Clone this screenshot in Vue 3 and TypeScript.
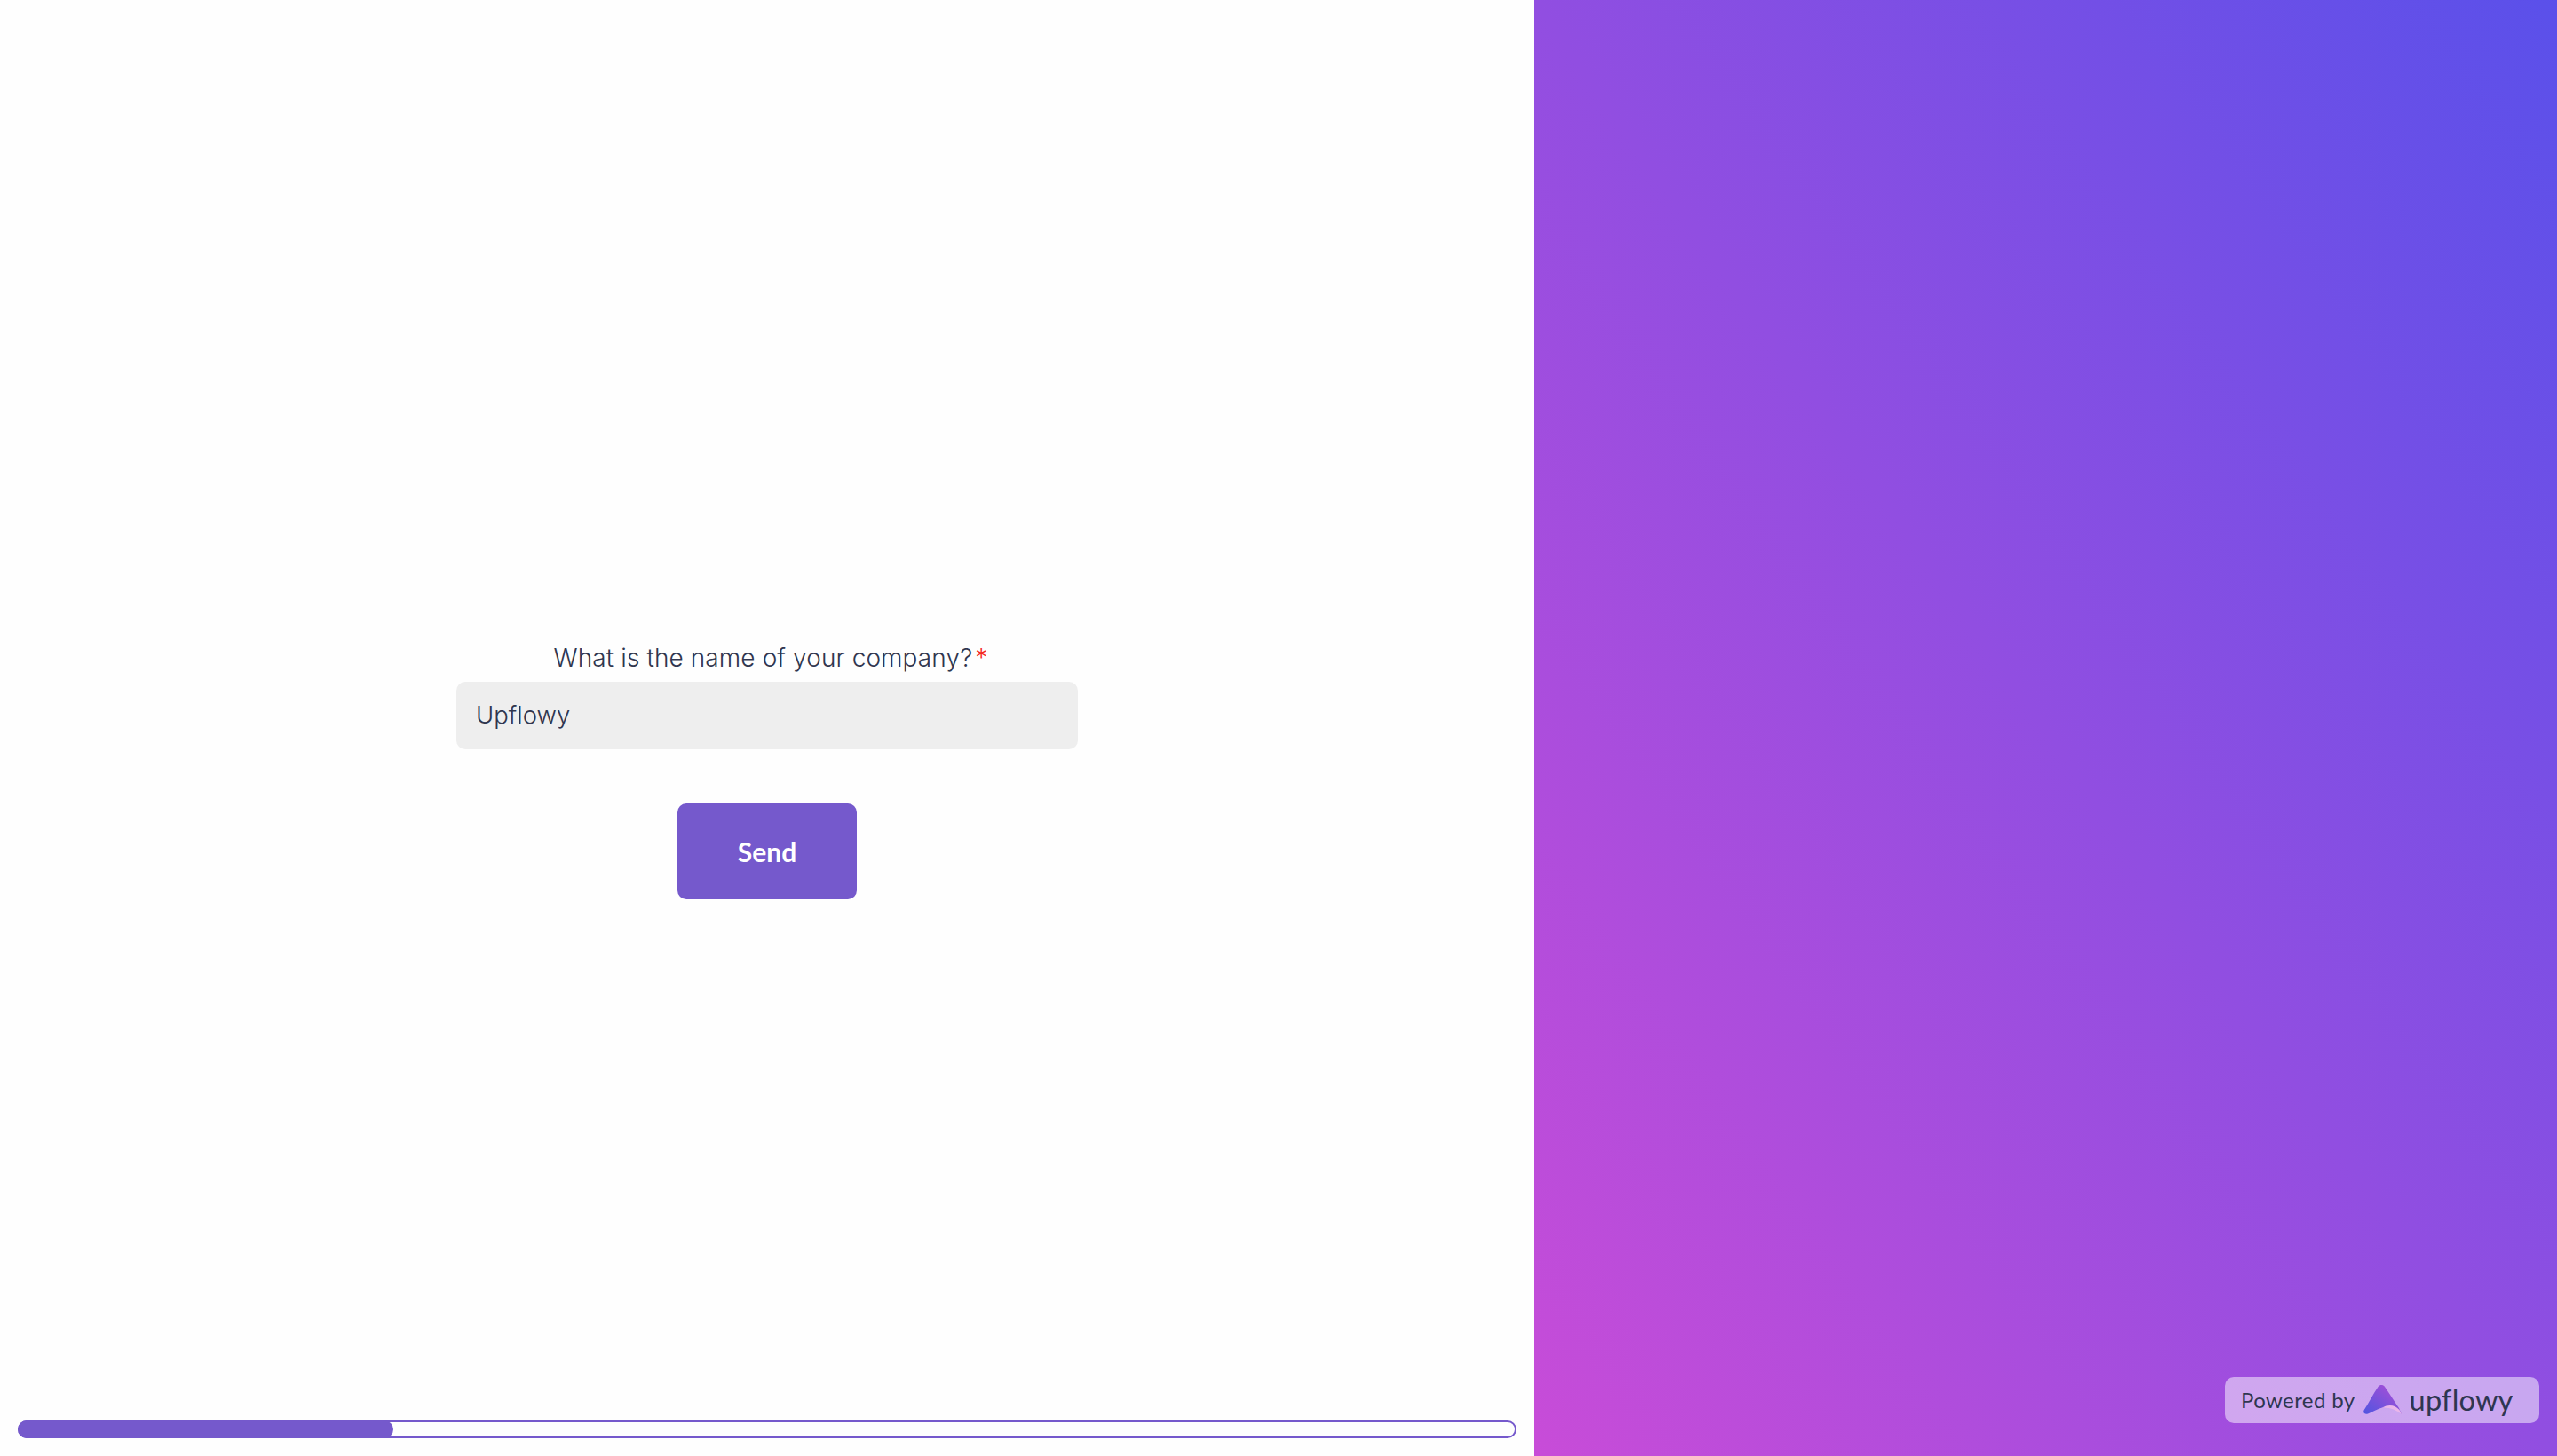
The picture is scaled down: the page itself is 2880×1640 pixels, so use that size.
<script setup lang="ts">
// 表单页：左侧问题与进度条，右侧渐变面板
import { ref } from 'vue'

const company = ref('Upflowy')
const progress = 25.1
</script>

<template>
  <div class="page">
    <section class="left">
      <form class="form" @submit.prevent>
        <label class="question" for="company">
          What is the name of your company?<span class="required">*</span>
        </label>
        <input id="company" v-model="company" class="answer" type="text" />
        <button class="send" type="submit">Send</button>
      </form>
      <div class="track">
        <div class="fill" :style="{ width: progress + '%' }"></div>
      </div>
    </section>
    <aside class="right">
      <div class="badge">
        <span class="powered">Powered by</span>
        <svg class="logo" viewBox="0 0 43 33" width="43" height="33">
          <defs>
            <linearGradient id="logoFill" x1="0" y1="1" x2="1" y2="0">
              <stop offset="0" stop-color="#4f55e0" />
              <stop offset="0.75" stop-color="#9a4fd8" />
            </linearGradient>
          </defs>
          <path
            d="M16.5 2 C18.5 -0.6 22 -0.6 24 2 C29 9 35 19 40 26 L43 33 C37 27 32 24.500 27 24.500 C19 25 11 30 5 32.500 C1.500 33.800 -1 31 0.800 28 C6 20 11 10 16.500 2 Z"
            fill="url(#logoFill)"
          />
          <path d="M21 25.500 C29 21 36 23 40.500 28 L43 33 C37 28 30 25 21 25.500 Z" fill="#eab6ea" />
        </svg>
        <span class="brand">upflowy</span>
      </div>
    </aside>
  </div>
</template>

<style>
body {
  margin: 0;
  background: #fff;
}
</style>

<style scoped>
.page {
  display: flex;
  width: 2880px;
  height: 1640px;
  overflow: hidden;
}
.left {
  flex: 0 0 1728px;
  display: flex;
  flex-direction: column;
  background: #fefefe;
}
.form {
  flex: 1;
  display: flex;
  flex-direction: column;
  align-items: center;
  padding-top: 721px;
  box-sizing: border-box;
}
.question {
  margin-left: 8px;
  height: 47px;
  font: 300 28px/40px Inter, "Open Sans", sans-serif;
  letter-spacing: 0.1px;
  color: #30364f;
}
.required {
  color: #f5271d;
  margin-left: 3px;
}
.answer {
  width: 700px;
  height: 76px;
  box-sizing: border-box;
  padding: 0 22px 2px;
  border: none;
  border-radius: 10px;
  background: #eeeeee;
  font: 300 27.500px Inter, "Open Sans", sans-serif;
  color: #30364f;
  outline: none;
}
.send {
  margin-top: 61px;
  width: 202px;
  height: 108px;
  border: none;
  border-radius: 10px;
  background: #7559cc;
  color: #fff;
  font: 700 30px Lato, sans-serif;
  cursor: pointer;
}
.track {
  height: 20px;
  margin: 0 20px 20px;
  box-sizing: border-box;
  border: 2px solid #7559cc;
  border-radius: 10px;
}
.fill {
  height: 20px;
  margin: -2px 0 0 -2px;
  border-radius: 10px;
  background: #7559cc;
}
.right {
  flex: 1;
  position: relative;
  background: linear-gradient(to top right, #c84cd8, #5a50ea);
}
.badge {
  position: absolute;
  right: 20px;
  bottom: 37px;
  display: flex;
  align-items: center;
  width: 354px;
  height: 52px;
  box-sizing: border-box;
  padding: 0 0 2px 18px;
  border-radius: 10px;
  background: rgba(255, 255, 255, 0.5);
  color: #2e3650;
}
.powered {
  font: 400 24px Lato, sans-serif;
  letter-spacing: 0.4px;
}
.logo {
  margin-left: 9px;
}
.brand {
  margin-left: 9px;
  font: 400 32.500px Lato, sans-serif;
  letter-spacing: 0.2px;
}
</style>
